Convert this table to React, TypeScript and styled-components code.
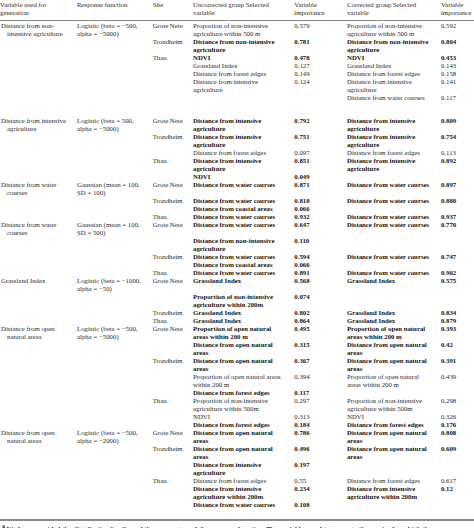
import styled, { createGlobalStyle } from 'styled-components';
import { Fragment } from 'react';

const GlobalStyle = createGlobalStyle`
  html, body {
    margin: 0;
    padding: 0;
    background: #ffffff;
  }
`;

const Page = styled.div`
  width: 474px;
  height: 528px;
  overflow: hidden;
  background: #ffffff;
  font-family: 'Liberation Serif', 'DejaVu Serif', serif;
  font-size: 6.8px;
  line-height: 8px;
  color: #2b2b2b;
`;

const Table = styled.table`
  border-collapse: collapse;
  table-layout: fixed;
  width: 520px;
`;

const Col = styled.col<{ $w: number }>`
  width: ${(p) => p.$w}px;
`;

const HeadCell = styled.th`
  text-align: left;
  font-weight: normal;
  vertical-align: top;
  white-space: nowrap;
  padding: 1px 0 2.5px;
  border-bottom: 1.5px solid #8c8c8c;
`;

const Row = styled.tr<{ $gap: number }>`
  & > td {
    padding-top: ${(p) => p.$gap}px;
  }
`;

const Cell = styled.td<{ $bold?: boolean }>`
  padding: 0;
  vertical-align: top;
  white-space: nowrap;
  font-weight: ${(p) => (p.$bold ? 700 : 400)};
  color: ${(p) => (p.$bold ? '#141414' : '#2b2b2b')};
`;

const VarCell = styled(Cell)`
  padding-left: 7px;
  text-indent: -6px;
`;

const BottomRule = styled.div`
  margin-top: 10.5px;
  height: 2px;
  width: 474px;
  background: #8c8c8c;
`;

const Footnote = styled.div`
  padding: 1px 0 0 2px;
  white-space: nowrap;
  font-size: 7px;
  font-weight: 700;
  color: #1a1a1a;
`;

type Entry = {
  u: string[];
  ui?: string;
  c: string[];
  ci?: string;
  b?: boolean;
};

type Site = { name: string; entries: Entry[] };

type Group = {
  variable: string[];
  fn: string[];
  gap: number;
  sites: Site[];
};

const bold = (u: string[], ui: string, ci?: string): Entry => ({
  u,
  ui,
  c: ci ? u : [],
  ci,
  b: true,
});

const plain = (u: string[], ui: string, ci?: string): Entry => ({
  u,
  ui,
  c: ci ? u : [],
  ci,
});

const WATER = ['Distance from water courses'];
const COASTAL = ['Distance from coastal areas'];
const FOREST = ['Distance from forest edges'];
const INTENSIVE = ['Distance from intensive', 'agriculture'];
const NON_INT = ['Distance from non-intensive', 'agriculture'];
const OPEN = ['Distance from open natural', 'areas'];
const GRASS = ['Grassland Index'];

const groups: Group[] = [
  {
    variable: ['Distance from non-', 'intensive agriculture'],
    fn: ['Logistic (beta = −500,', 'alpha = −5000)'],
    gap: 1.7,
    sites: [
      {
        name: 'Grote Nete',
        entries: [plain(['Proportion of non-intensive', 'agriculture within 500 m'], '0.579', '0.592')],
      },
      { name: 'Trondheim', entries: [bold(NON_INT, '0.781', '0.804')] },
      {
        name: 'Thau',
        entries: [
          bold(['NDVI'], '0.478', '0.453'),
          plain(GRASS, '0.127', '0.143'),
          plain(FOREST, '0.149', '0.158'),
          plain(INTENSIVE, '0.124', '0.141'),
          { u: [], c: WATER, ci: '0.117' },
        ],
      },
    ],
  },
  {
    variable: ['Distance from intensive', 'agriculture'],
    fn: ['Logistic (beta = 500,', 'alpha = −5000)'],
    gap: 14.6,
    sites: [
      { name: 'Grote Nete', entries: [bold(INTENSIVE, '0.792', '0.809')] },
      { name: 'Trondheim', entries: [bold(INTENSIVE, '0.751', '0.754'), plain(FOREST, '0.097', '0.113')] },
      { name: 'Thau', entries: [bold(INTENSIVE, '0.851', '0.892'), bold(['NDVI'], '0.049')] },
    ],
  },
  {
    variable: ['Distance from water', 'courses'],
    fn: ['Gaussian (mean = 100,', 'SD = 100)'],
    gap: 0,
    sites: [
      { name: 'Grote Nete', entries: [bold(WATER, '0.871', '0.897')] },
      { name: 'Trondheim', entries: [bold(WATER, '0.818', '0.880'), bold(COASTAL, '0.066')] },
      { name: 'Thau', entries: [bold(WATER, '0.932', '0.937')] },
    ],
  },
  {
    variable: ['Distance from water', 'courses'],
    fn: ['Gaussian (mean = 100,', 'SD = 500)'],
    gap: 0,
    sites: [
      { name: 'Grote Nete', entries: [bold(WATER, '0.647', '0.770'), bold(NON_INT, '0.110')] },
      { name: 'Trondheim', entries: [bold(WATER, '0.594', '0.747'), bold(COASTAL, '0.066')] },
      { name: 'Thau', entries: [bold(WATER, '0.891', '0.902')] },
    ],
  },
  {
    variable: ['Grassland Index'],
    fn: ['Logistic (beta = −1000,', 'alpha = −50)'],
    gap: 0,
    sites: [
      {
        name: 'Grote Nete',
        entries: [
          bold(GRASS, '0.568', '0.575'),
          bold(['Proportion of non-intensive', 'agriculture within 200m'], '0.074'),
        ],
      },
      { name: 'Trondheim', entries: [bold(GRASS, '0.802', '0.834')] },
      { name: 'Thau', entries: [bold(GRASS, '0.864', '0.879')] },
    ],
  },
  {
    variable: ['Distance from open', 'natural areas'],
    fn: ['Logistic (beta = −500,', 'alpha = −5000)'],
    gap: 0,
    sites: [
      {
        name: 'Grote Nete',
        entries: [
          bold(['Proportion of open natural', 'areas within 200 m'], '0.495', '0.393'),
          bold(OPEN, '0.315', '0.42'),
        ],
      },
      {
        name: 'Trondheim',
        entries: [
          bold(OPEN, '0.367', '0.391'),
          {
            u: ['Proportion of open natural areas', 'within 200 m'],
            ui: '0.394',
            c: ['Proportion of open natural', 'areas within 200 m'],
            ci: '0.439',
          },
          bold(FOREST, '0.117'),
        ],
      },
      {
        name: 'Thau',
        entries: [
          plain(['Proportion of non-intensive', 'agriculture within 500m'], '0.297', '0.298'),
          plain(['NDVI'], '0.313', '0.326'),
          bold(FOREST, '0.184', '0.176'),
        ],
      },
    ],
  },
  {
    variable: ['Distance from open', 'natural areas'],
    fn: ['Logistic (beta = −500,', 'alpha = −2000)'],
    gap: 0,
    sites: [
      { name: 'Grote Nete', entries: [bold(OPEN, '0.786', '0.808')] },
      { name: 'Trondheim', entries: [bold(OPEN, '0.496', '0.609'), bold(INTENSIVE, '0.197')] },
      {
        name: 'Thau',
        entries: [
          plain(FOREST, '0.55', '0.617'),
          bold(['Distance from intensive', 'agriculture within 200m'], '0.234', '0.12'),
          bold(WATER, '0.108'),
        ],
      },
    ],
  },
];

const Lines = ({ lines }: { lines: string[] }) => (
  <>
    {lines.map((l, i) => (
      <Fragment key={i}>
        {i > 0 && <br />}
        {l}
      </Fragment>
    ))}
  </>
);

const App = () => {
  const rows: JSX.Element[] = [];
  groups.forEach((g, gi) => {
    let first = true;
    g.sites.forEach((s, si) => {
      s.entries.forEach((e, ei) => {
        rows.push(
          <Row key={`${gi}-${si}-${ei}`} $gap={first ? g.gap : 0}>
            <VarCell>{first && <Lines lines={g.variable} />}</VarCell>
            <Cell>{first && <Lines lines={g.fn} />}</Cell>
            <Cell>{ei === 0 ? s.name : ''}</Cell>
            <Cell $bold={e.b}>
              <Lines lines={e.u} />
            </Cell>
            <Cell $bold={e.b}>{e.ui}</Cell>
            <Cell $bold={e.b}>
              <Lines lines={e.c} />
            </Cell>
            <Cell $bold={e.b}>{e.ci}</Cell>
          </Row>,
        );
        first = false;
      });
    });
  });

  return (
    <>
      <GlobalStyle />
      <Page>
        <Table>
          <colgroup>
            <Col $w={77} />
            <Col $w={75.7} />
            <Col $w={40.3} />
            <Col $w={101.3} />
            <Col $w={52.7} />
            <Col $w={94} />
            <Col $w={79} />
          </colgroup>
          <thead>
            <tr>
              <HeadCell>
                Variable used for
                <br />
                generation
              </HeadCell>
              <HeadCell>Response function</HeadCell>
              <HeadCell>Site</HeadCell>
              <HeadCell>
                Uncorrected group Selected
                <br />
                variable
              </HeadCell>
              <HeadCell>
                Variable
                <br />
                importance
              </HeadCell>
              <HeadCell>
                Corrected group Selected
                <br />
                variable
              </HeadCell>
              <HeadCell>
                Variable
                <br />
                importance
              </HeadCell>
            </tr>
          </thead>
          <tbody>{rows}</tbody>
        </Table>
        <BottomRule />
        <Footnote>
          <sup>a</sup> We have provided the distribution family and the parameters of the response function. The
          variables used to generate the species for which the same
        </Footnote>
      </Page>
    </>
  );
};

export default App;
